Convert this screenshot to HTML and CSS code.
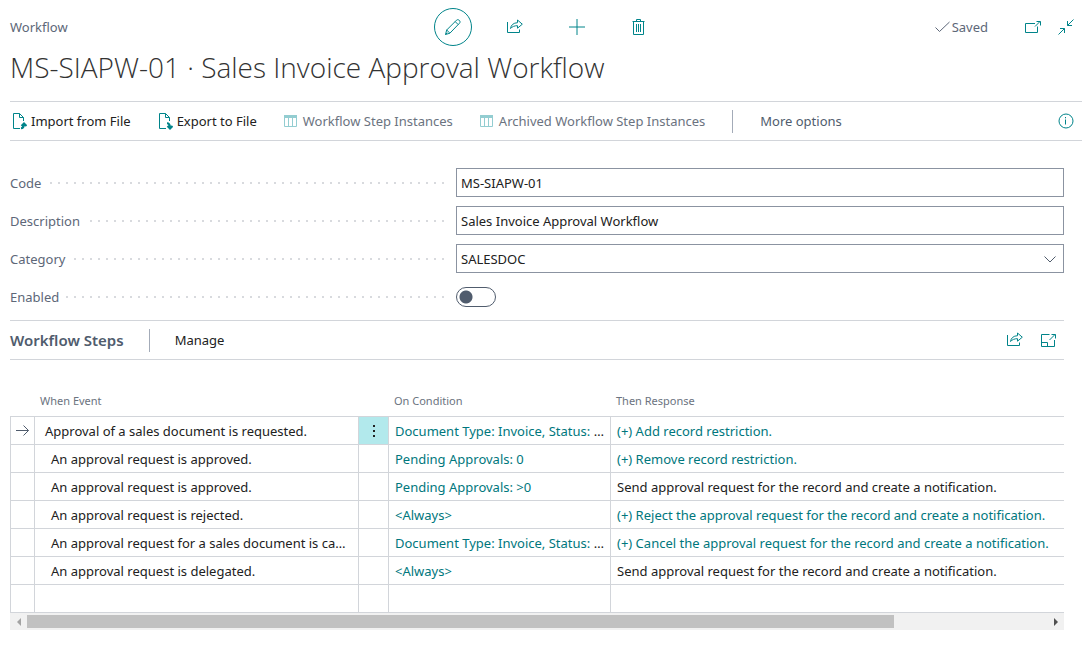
FILE: index.html
```html
<!DOCTYPE html>
<html lang="en">
<head>
    <meta charset="UTF-8">
    <meta name="viewport" content="width=device-width, initial-scale=1">
    <title>Workflow - MS-SIAPW-01</title>
    <link rel="stylesheet" href="styles.css">
</head>
<body>
    <svg class="sprite" aria-hidden="true">
        <symbol id="icon-share" viewBox="0 0 16 16">
            <path d="M.5 3v10.500h12v-3M3.500 9.500C4 6 6.500 3.800 10.500 3.700V1L15.300 5.200l-4.800 4V6.700C7.500 6.600 5 7.800 3.500 9.500z"/>
        </symbol>
        <symbol id="icon-columns" viewBox="0 0 13 12">
            <path class="solid" d="M0 0h13v3H0z"/>
            <path d="M.5 1v10.500h12V1M4.500 2v9.500M8.500 2v9.500"/>
        </symbol>
    </svg>

    <header class="page-header">
        <span class="caption">Workflow</span>
        <div class="actions">
            <button class="icon-btn round" aria-label="Edit">
                <svg width="18" height="18" viewBox="0 0 18 18"><path d="M1.500 16.500l1.200-4.500L12.500 2.200c1.800-1.700 4.800 1.200 3 3L5.900 15.200zM2.700 12l3.200 3.200M11.200 3.600l3 3M1.500 16.500l1.800-1.800"/></svg>
            </button>
            <button class="icon-btn" aria-label="Share">
                <svg width="16" height="16"><use href="#icon-share"/></svg>
            </button>
            <button class="icon-btn" aria-label="New">
                <svg width="16" height="16" viewBox="0 0 16 16"><path d="M8 0v16M0 8h16"/></svg>
            </button>
            <button class="icon-btn" aria-label="Delete">
                <svg width="14" height="16" viewBox="0 0 14 16"><path d="M.5 2.500h12M4.500 2.500V.5h4v2M1.500 2.500v13h10v-13M4.500 5v8M6.500 5v8M8.500 5v8"/></svg>
            </button>
        </div>
        <div class="status">
            <span class="saved">
                <svg width="15" height="12" viewBox="0 0 15 12"><path d="M.5 6.500L4.500 10.500 14.500 1"/></svg>
                Saved
            </span>
            <button class="icon-btn small" aria-label="Open in new window">
                <svg width="16" height="12" viewBox="0 0 16 12"><path d="M10 2.500H.5v9h12V5.500M10 5.500L15 .5M11.500 .5H15.500V4.500"/></svg>
            </button>
            <button class="icon-btn small" aria-label="Collapse">
                <svg width="16" height="16" viewBox="0 0 16 16"><path d="M15.500 .5L9.500 6.500M9.500 2v4.500H14M.5 15.500l6-6M2 9.500h4.500V14"/></svg>
            </button>
        </div>
    </header>

    <h1>MS-SIAPW-01 · Sales Invoice Approval Workflow</h1>

    <nav class="toolbar">
        <button class="tool">
            <svg width="15" height="17" viewBox="0 0 15 17"><path d="M8 15.500H1.500V.5h6l4 4V8M7.500 .5v4h4"/><path class="bold" d="M9 15.300c2 0 3-1 3-4M9.500 13l2.500-2.500 2.500 2.500"/></svg>
            Import from File
        </button>
        <button class="tool">
            <svg width="15" height="17" viewBox="0 0 15 17"><path d="M8 15.500H1.500V.5h6l4 4V8M7.500 .5v4h4"/><path class="bold" d="M9 10.200c2 0 3 1 3 4.500M9.500 13l2.500 2.500 2.500-2.500"/></svg>
            Export to File
        </button>
        <button class="tool" disabled>
            <svg width="13" height="12"><use href="#icon-columns"/></svg>
            Workflow Step Instances
        </button>
        <button class="tool" disabled>
            <svg width="13" height="12"><use href="#icon-columns"/></svg>
            Archived Workflow Step Instances
        </button>
        <span class="divider"></span>
        <button class="tool more">More options</button>
        <button class="icon-btn small info" aria-label="Details">
            <svg width="16" height="16" viewBox="0 0 16 16"><circle cx="8" cy="8" r="7"/><path d="M7.500 6.500v5M7.500 4v1.300"/></svg>
        </button>
    </nav>

    <main>
        <form class="fields">
            <div class="field">
                <label for="code">Code</label>
                <input type="text" id="code" value="MS-SIAPW-01">
            </div>
            <div class="field">
                <label for="description">Description</label>
                <input type="text" id="description" value="Sales Invoice Approval Workflow">
            </div>
            <div class="field">
                <label for="category">Category</label>
                <div class="select">
                    <select id="category">
                        <option>SALESDOC</option>
                    </select>
                    <svg width="12" height="7" viewBox="0 0 12 7"><path d="M.5 .5L6 6 11.500 .5"/></svg>
                </div>
            </div>
            <div class="field">
                <label for="enabled">Enabled</label>
                <input type="checkbox" id="enabled" class="toggle">
            </div>
        </form>

        <section>
            <div class="part-header">
                <h2>Workflow Steps</h2>
                <span class="divider"></span>
                <button class="tool">Manage</button>
                <div class="part-actions">
                    <button class="icon-btn small" aria-label="Share list">
                        <svg width="16" height="16"><use href="#icon-share"/></svg>
                    </button>
                    <button class="icon-btn small" aria-label="Focus mode">
                        <svg width="15" height="13" viewBox="0 0 15 13"><path d="M8.500 .5H.5v12h13V6M.5 8.500h6v4M8.500 6l5.500-5.500M10.500 .5h4V4.500"/></svg>
                    </button>
                </div>
            </div>

            <table class="steps">
                <colgroup>
                    <col class="col-marker">
                    <col class="col-event">
                    <col class="col-menu">
                    <col class="col-condition">
                    <col>
                </colgroup>
                <thead>
                    <tr>
                        <th></th>
                        <th>When Event</th>
                        <th></th>
                        <th>On Condition</th>
                        <th>Then Response</th>
                    </tr>
                </thead>
                <tbody>
                    <tr>
                        <td class="marker"><svg width="13" height="11" viewBox="0 0 13 11"><path d="M0 5.500h12.500M7.500 .5l5 5-5 5"/></svg></td>
                        <td class="event">Approval of a sales document is requested.</td>
                        <td class="menu">
                            <button aria-label="Row options"><svg width="2" height="14" viewBox="0 0 2 14"><path class="solid" d="M0 1h2v2H0zM0 6h2v2H0zM0 11h2v2H0z"/></svg></button>
                        </td>
                        <td><a href="#">Document Type: Invoice, Status: Open</a></td>
                        <td><a href="#">(+) Add record restriction.</a></td>
                    </tr>
                    <tr>
                        <td></td>
                        <td class="event child">An approval request is approved.</td>
                        <td></td>
                        <td><a href="#">Pending Approvals: 0</a></td>
                        <td><a href="#">(+) Remove record restriction.</a></td>
                    </tr>
                    <tr>
                        <td></td>
                        <td class="event child">An approval request is approved.</td>
                        <td></td>
                        <td><a href="#">Pending Approvals: &gt;0</a></td>
                        <td>Send approval request for the record and create a notification.</td>
                    </tr>
                    <tr>
                        <td></td>
                        <td class="event child">An approval request is rejected.</td>
                        <td></td>
                        <td><a href="#">&lt;Always&gt;</a></td>
                        <td><a href="#">(+) Reject the approval request for the record and create a notification.</a></td>
                    </tr>
                    <tr>
                        <td></td>
                        <td class="event child">An approval request for a sales document is canceled.</td>
                        <td></td>
                        <td><a href="#">Document Type: Invoice, Status: Open</a></td>
                        <td><a href="#">(+) Cancel the approval request for the record and create a notification.</a></td>
                    </tr>
                    <tr>
                        <td></td>
                        <td class="event child">An approval request is delegated.</td>
                        <td></td>
                        <td><a href="#">&lt;Always&gt;</a></td>
                        <td>Send approval request for the record and create a notification.</td>
                    </tr>
                    <tr>
                        <td></td>
                        <td></td>
                        <td></td>
                        <td></td>
                        <td></td>
                    </tr>
                </tbody>
            </table>

            <div class="scrollbar">
                <button class="scroll-left" aria-label="Scroll left" disabled></button>
                <div class="track"><div class="thumb"></div></div>
                <button class="scroll-right" aria-label="Scroll right"></button>
            </div>
        </section>
    </main>
</body>
</html>
```
FILE: styles.css
```css
* {
    box-sizing: border-box;
}
body {
    margin: 0;
    padding: 8px 10px;
    font-family: "Noto Sans", "Open Sans", sans-serif;
    font-size: 13px;
    line-height: 20px;
    color: #212121;
    background: #fff;
}
button, input, select {
    font: inherit;
    color: inherit;
}
button {
    border: none;
    padding: 0;
    background: none;
    cursor: pointer;
}
svg {
    display: block;
    flex: none;
    fill: none;
    stroke: currentColor;
}
.solid {
    fill: currentColor;
    stroke: none;
}
.bold {
    stroke-width: 2px;
}
.sprite {
    position: absolute;
    width: 0;
    height: 0;
}

/* Header */
.page-header {
    display: grid;
    grid-template-columns: 1fr auto 1fr;
    align-items: center;
    color: #5d6778;
}
.actions {
    display: flex;
    gap: 24px;
}
.icon-btn {
    display: flex;
    align-items: center;
    justify-content: center;
    width: 38px;
    height: 38px;
    color: #00848a;
}
.icon-btn.round {
    border: 1px solid #00848a;
    border-radius: 50%;
}
.icon-btn.small {
    width: 16px;
    height: 20px;
}
.status {
    display: flex;
    justify-content: flex-end;
    gap: 17px;
    padding-right: 8px;
}
.saved {
    display: flex;
    align-items: center;
    gap: 2px;
    margin-right: 20px;
}
h1 {
    margin: 0 0 13px;
    font-family: "Open Sans", "Noto Sans", sans-serif;
    font-size: 28px;
    font-weight: 300;
    line-height: 42px;
    color: #333;
}

/* Action bar */
.toolbar {
    display: flex;
    align-items: center;
    height: 40px;
    padding: 0 8px 0 2px;
    gap: 27px;
    border-top: 1px solid #d2d5da;
    border-bottom: 1px solid #d2d5da;
}
.tool {
    display: flex;
    align-items: center;
    gap: 4px;
    white-space: nowrap;
}
.tool svg {
    color: #00848a;
}
.tool:disabled {
    gap: 6px;
    color: #6b7380;
    cursor: default;
}
.tool:disabled svg {
    color: #93cdd1;
}
.tool.more {
    color: #505c6d;
}
.divider {
    width: 1px;
    height: 23px;
    background: #a3abb8;
}
.info {
    margin-left: auto;
}

/* Fields */
main {
    padding-right: 18px;
}
.fields {
    display: grid;
    gap: 9px;
    margin: 27px 0 9px;
}
.field {
    display: grid;
    grid-template-columns: 446fr 608fr;
    align-items: center;
    height: 29px;
}
.field label {
    display: flex;
    align-items: center;
    padding-right: 12px;
    color: #5d6778;
}
/* dotted leader between the caption and its control */
.field label::after {
    content: "";
    flex: 1;
    height: 2px;
    margin-left: 7px;
    background: repeating-linear-gradient(to left, #d8dade 0 2px, transparent 2px 8px);
}
.field input[type="text"],
.field select {
    width: 100%;
    height: 29px;
    padding: 0 4px;
    border: 1px solid #8b93a1;
    border-radius: 0;
    background: #fff;
    appearance: none;
}
.select {
    position: relative;
}
.select svg {
    position: absolute;
    top: 12px;
    right: 8px;
    color: #505c6d;
    pointer-events: none;
}
.toggle {
    width: 40px;
    height: 20px;
    margin: 0;
    border: 1px solid #505c6d;
    border-radius: 10px;
    background: radial-gradient(circle at 9px 9px, #505c6d 6px, transparent 7px);
    appearance: none;
}
.toggle:checked {
    background: radial-gradient(circle at 29px 9px, #00848a 6px, transparent 7px);
}

/* Workflow steps */
.part-header {
    display: flex;
    align-items: center;
    gap: 25px;
    height: 40px;
    border-top: 1px solid #d2d5da;
    border-bottom: 1px solid #d2d5da;
}
h2 {
    margin: 0;
    font-size: 15px;
    font-weight: 600;
    color: #505c6d;
}
.part-actions {
    display: flex;
    gap: 17px;
    margin-left: auto;
    padding-right: 8px;
}
.steps {
    width: 100%;
    margin-top: 28px;
    table-layout: fixed;
    border-spacing: 0;
}
.col-marker {
    width: 24px;
}
.col-event {
    width: 324px;
}
.col-menu {
    width: 30px;
}
.col-condition {
    width: 222px;
}
.steps th {
    height: 28px;
    padding: 0 6px 2px;
    font-size: 11px;
    font-weight: 400;
    text-align: left;
    color: #6b7380;
}
.steps td {
    height: 28px;
    padding: 0 6px;
    border-top: 1px solid #d2d5da;
    border-left: 1px solid #d2d5da;
    overflow: hidden;
    text-overflow: ellipsis;
    white-space: nowrap;
}
.steps tr:last-child td {
    height: 29px;
    border-bottom: 1px solid #d2d5da;
}
.steps td.event {
    padding: 0 8px 0 10px;
}
.steps td.child {
    padding-left: 16px;
}
.steps td.marker {
    padding: 0 5px;
    color: #505c6d;
}
.steps td.menu {
    padding: 0;
    background: #b2e9ec;
}
.menu button {
    display: flex;
    align-items: center;
    justify-content: center;
    width: 100%;
    height: 27px;
}
.steps a {
    color: #00777d;
    text-decoration: none;
}
.scrollbar {
    display: flex;
    height: 17px;
    padding: 2px 0;
    background: #f1f1f1;
}
.scrollbar button {
    display: flex;
    align-items: center;
    justify-content: center;
    width: 17px;
}
.scroll-left::before,
.scroll-right::before {
    content: "";
    border: 4px solid transparent;
}
.scroll-left::before {
    border-left-width: 0;
    border-right-color: #a3a3a3;
}
.scroll-right::before {
    border-right-width: 0;
    border-left-color: #505050;
}
.track {
    flex: 1;
}
.thumb {
    width: 85%;
    height: 13px;
    background: #c1c1c1;
}
```
